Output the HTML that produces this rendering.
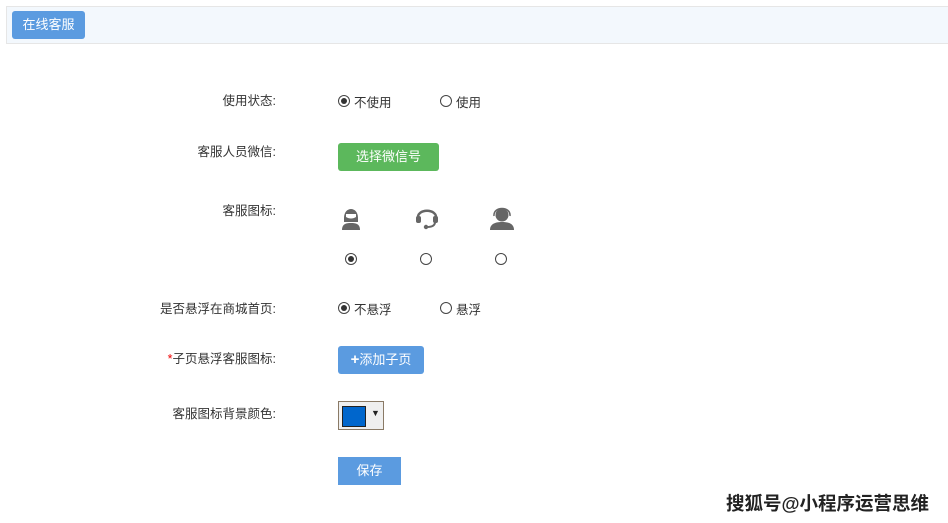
<!DOCTYPE html><html><head><meta charset="utf-8"><style>
body{margin:0;width:948px;height:523px;background:#fff;position:relative;font-family:"Liberation Sans","Noto Sans CJK SC",sans-serif;font-size:12.5px;color:#333;overflow:hidden}
.a{position:absolute;white-space:nowrap}
.lbl{position:absolute;right:672px;white-space:nowrap;line-height:16px}
.r{position:absolute;width:10px;height:10px;border:1px solid #444;border-radius:50%;background:#fff}
.r.on::after{content:"";position:absolute;left:2px;top:2px;width:6px;height:6px;border-radius:50%;background:#333}
.btn{position:absolute;color:#fff;text-align:center;border-radius:3px;font-size:13px}
</style></head><body>
<div class="a" style="left:6px;top:6px;width:942px;height:36px;background:#f3f8fd;border:1px solid #e6e6e6;border-right:none"></div>
<div class="btn" style="left:12px;top:11px;width:73px;height:28px;line-height:28px;background:#5b9be0;font-size:13px">在线客服</div>

<div class="lbl" style="top:93px">使用状态:</div>
<div class="r on" style="left:338px;top:95px"></div><div class="a" style="left:354px;top:92px">不使用</div>
<div class="r" style="left:440px;top:95px"></div><div class="a" style="left:456px;top:92px">使用</div>

<div class="lbl" style="top:144px">客服人员微信:</div>
<div class="btn" style="left:338px;top:143px;width:101px;height:28px;line-height:28px;background:#5cb85c">选择微信号</div>

<div class="lbl" style="top:203px">客服图标:</div>
<svg class="a" style="left:341px;top:205px" width="20" height="25" viewBox="0 0 20 25" fill="#666"><path d="M3 13 C3 1 17 1 17 13 L17 17 L3 17Z"/><path d="M5 9 L15 9 L15 12 C12 14 8 14 5 12Z" fill="#fff"/><path d="M1 25 C1 19 5 18 10 18 C15 18 19 19 19 25Z"/></svg>
<svg class="a" style="left:414px;top:205px" width="26" height="26" viewBox="0 0 26 26" fill="none" stroke="#666" stroke-width="2.5"><path d="M4 14 C2 3 24 3 22 14"/><rect x="2" y="11" width="5" height="7" rx="2" fill="#666" stroke="none"/><rect x="19" y="11" width="5" height="7" rx="2" fill="#666" stroke="none"/><path d="M21 17 C21 21 17 22 13 22" stroke-width="2"/><circle cx="12" cy="22" r="2.2" fill="#666" stroke="none"/></svg>
<svg class="a" style="left:489px;top:205px" width="26" height="25" viewBox="0 0 26 25" fill="#666"><circle cx="13" cy="10" r="6.5"/><path d="M5 11 C4 1 22 1 21 11" fill="none" stroke="#666" stroke-width="1.5"/><path d="M1 25 C1 19 6 17 13 17 C20 17 25 19 25 25Z"/></svg>
<div class="r on" style="left:345px;top:253px"></div>
<div class="r" style="left:420px;top:253px"></div>
<div class="r" style="left:495px;top:253px"></div>

<div class="lbl" style="top:301px">是否悬浮在商城首页:</div>
<div class="r on" style="left:338px;top:302px"></div><div class="a" style="left:354px;top:299px">不悬浮</div>
<div class="r" style="left:440px;top:302px"></div><div class="a" style="left:456px;top:299px">悬浮</div>

<div class="lbl" style="top:351px"><span style="color:#e00">*</span>子页悬浮客服图标:</div>
<div class="btn" style="left:338px;top:346px;width:86px;height:28px;line-height:28px;background:#5b9be0"><b style="font-size:15px">+</b>添加子页</div>

<div class="lbl" style="top:406px">客服图标背景颜色:</div>
<div class="a" style="left:338px;top:401px;width:44px;height:27px;border:1px solid #8a7a66;background:#efefef"></div>
<div class="a" style="left:342px;top:406px;width:22px;height:19px;border:1px solid #222;background:#0066cc"></div>
<div class="a" style="left:371px;top:408px;font-size:9px;color:#222">▼</div>

<div class="btn" style="left:338px;top:457px;width:63px;height:28px;line-height:28px;background:#5b9be0;border-radius:0">保存</div>

<div class="a" style="left:726px;top:490px;font-size:18.5px;font-weight:bold;color:#222">搜狐号@小程序运营思维</div>
</body></html>
